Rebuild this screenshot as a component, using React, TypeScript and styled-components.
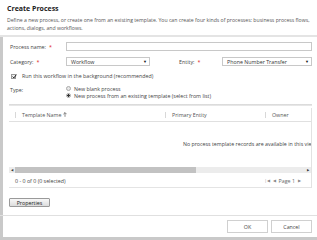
import React from "react";
import styled, { createGlobalStyle } from "styled-components";

const Global = createGlobalStyle`
  html, body { margin: 0; padding: 0; background: #fff; }
  body { font-family: "Open Sans", "Noto Sans", "Liberation Sans", sans-serif; color: #444; }
  * { box-sizing: border-box; }
`;

const Dialog = styled.div`
  width: 317px;
  height: 240px;
  display: flex;
  flex-direction: column;
  overflow: hidden;
  background: #fff;
`;

const Header = styled.div`
  height: 37px;
  padding: 4px 5px 0 7px;
  border-bottom: 2px solid #e4e4e4;
  flex-shrink: 0;
`;

const Title = styled.div`
  font-size: 7px;
  font-weight: 700;
  color: #222;
  line-height: 9px;
  margin-bottom: 3px;
`;

const Desc = styled.div`
  font-size: 5.15px;
  line-height: 8px;
  color: #555;
  width: 306px;
`;

const Body = styled.div`
  flex: 1;
  display: flex;
  min-height: 0;
`;

const LeftStrip = styled.div`
  width: 3px;
  background: #c9c9c9;
  flex-shrink: 0;
`;

const Content = styled.div`
  flex: 1;
  display: flex;
  flex-direction: column;
  padding: 0 5px 0 3px;
  font-size: 5.3px;
  min-width: 0;
`;

const Row = styled.div<{ $h: number; $mt?: number }>`
  display: flex;
  align-items: center;
  height: ${(p) => p.$h}px;
  margin-top: ${(p) => p.$mt ?? 0}px;
`;

const Label = styled.div<{ $w: number; $pl?: number }>`
  width: ${(p) => p.$w}px;
  flex-shrink: 0;
  padding-left: ${(p) => p.$pl ?? 4}px;
  color: #444;
  white-space: nowrap;
`;

const Req = styled.span`
  color: #d22;
  margin-left: 3px;
`;

const Input = styled.div`
  flex: 1;
  height: 9px;
  border: 1px solid #c8c8c8;
  background: #fff;
`;

const Select = styled.div<{ $w: number }>`
  width: ${(p) => p.$w}px;
  height: 9px;
  border: 1px solid #c8c8c8;
  display: flex;
  align-items: center;
  justify-content: space-between;
  padding: 0 2px 0 4px;
  color: #333;
  white-space: nowrap;
`;

const Arrow = styled.span`
  font-size: 4px;
  color: #111;
`;

const Check = styled.span`
  width: 5px;
  height: 5px;
  border: 1px solid #999;
  background: #eee;
  margin: 0 6px 0 5px;
  display: inline-flex;
  align-items: center;
  justify-content: center;
  position: relative;
`;

const TypeBlock = styled.div`
  display: flex;
  margin-top: 5px;
`;

const TypeLabel = styled.div`
  width: 60px;
  padding-left: 4px;
  padding-top: 1px;
`;

const Radios = styled.div`
  display: flex;
  flex-direction: column;
`;

const RadioRow = styled.div`
  display: flex;
  align-items: center;
  height: 7px;
  white-space: nowrap;
`;

const Radio = styled.span<{ $on?: boolean }>`
  width: 5px;
  height: 5px;
  border-radius: 50%;
  border: 1px solid #aaa;
  background: ${(p) => (p.$on ? "radial-gradient(circle, #333 0 1px, #ddd 1.2px)" : "#e8e8e8")};
  margin-right: 3px;
`;

const Shadow = styled.div`
  height: 2px;
  margin: 5px 0 2px 3px;
  background: linear-gradient(#d6d6d6, #ececec);
`;

const Grid = styled.div`
  margin-left: 3px;
  border-right: 1px solid #e2e2e2;
  display: flex;
  flex-direction: column;
`;

const GridHead = styled.div`
  height: 14px;
  display: flex;
  align-items: center;
  border-bottom: 1px solid #e0e0e0;
  color: #555;
`;

const Col = styled.div<{ $w?: number }>`
  ${(p) => (p.$w ? `width: ${p.$w}px;` : "flex: 1;")}
  height: 6px;
  display: flex;
  align-items: center;
  gap: 2px;
  border-left: 1px solid #d8d8d8;
  padding-left: 6px;
  white-space: nowrap;
`;

const Spacer = styled.div`
  width: 6px;
`;

const GridBody = styled.div`
  height: 45px;
  display: flex;
  align-items: center;
  justify-content: flex-end;
  overflow: hidden;
  white-space: nowrap;
  color: #444;
  padding-bottom: 1px;
`;

const Empty = styled.div`
  margin-right: -6px;
`;

const HScroll = styled.div`
  height: 6px;
  display: flex;
  align-items: center;
  background: #ececec;
`;

const ScrollBtn = styled.span`
  width: 6px;
  font-size: 3px;
  color: #333;
  text-align: center;
`;

const Thumb = styled.div`
  width: 181px;
  height: 6px;
  background: #c2c2c2;
`;

const Fill = styled.div`
  flex: 1;
`;

const GridFoot = styled.div`
  height: 15px;
  display: flex;
  align-items: center;
  justify-content: space-between;
  border-bottom: 1px solid #e4e4e4;
  padding: 1px 10px 0 6px;
  color: #444;
`;

const Pager = styled.div`
  display: flex;
  align-items: center;
  gap: 3px;
  color: #666;
`;

const PagerIcon = styled.span`
  font-size: 4px;
  color: #888;
`;

const PropsBtn = styled.button`
  margin: 10px 0 0 3px;
  width: 41px;
  height: 9px;
  padding: 0;
  font: inherit;
  font-size: 5.3px;
  color: #222;
  border: 1px solid #9a9a9a;
  border-radius: 1px;
  background: linear-gradient(#f8f8f8, #dcdcdc);
  display: flex;
  align-items: center;
  justify-content: center;
`;

const Footer = styled.div`
  margin-top: 8px;
  border-top: 1px solid #e0e0e0;
  display: flex;
  justify-content: flex-end;
  gap: 3px;
  padding: 4px 5px 0 0;
  margin-left: -6px;
  margin-right: -5px;
`;

const DlgBtn = styled.button`
  width: 41px;
  height: 13px;
  padding: 0;
  font: inherit;
  font-size: 5.3px;
  color: #444;
  background: #fff;
  border: 1px solid #d0d0d0;
`;

const BottomBar = styled.div`
  height: 3px;
  background: #c9c9c9;
  flex-shrink: 0;
`;

export default function App() {
  return (
    <>
      <Global />
      <Dialog>
        <Header>
          <Title>Create Process</Title>
          <Desc>
            Define a new process, or create one from an existing template. You can create four kinds of processes: business process flows, actions, dialogs, and workflows.
          </Desc>
        </Header>
        <Body>
          <LeftStrip />
          <Content>
            <Row $h={9} $mt={5}>
              <Label $w={60}>
                Process name:<Req>*</Req>
              </Label>
              <Input />
            </Row>
            <Row $h={9} $mt={6}>
              <Label $w={60}>
                Category:<Req>*</Req>
              </Label>
              <Select $w={86}>
                Workflow<Arrow>▼</Arrow>
              </Select>
              <Label $w={72} $pl={29}>
                Entity:<Req>*</Req>
              </Label>
              <Select $w={92}>
                Phone Number Transfer<Arrow>▼</Arrow>
              </Select>
            </Row>
            <Row $h={8} $mt={6}>
              <Check>
                <svg width="5" height="5" viewBox="0 0 5 5" style={{ position: "absolute", left: 0, top: -1 }}>
                  <path d="M0.6 2.6 L1.9 3.9 L4.4 0.6" stroke="#222" strokeWidth="1" fill="none" />
                </svg>
              </Check>
              Run this workflow in the background (recommended)
            </Row>
            <TypeBlock>
              <TypeLabel>Type:</TypeLabel>
              <Radios>
                <RadioRow>
                  <Radio />
                  New blank process
                </RadioRow>
                <RadioRow>
                  <Radio $on />
                  New process from an existing template (select from list)
                </RadioRow>
              </Radios>
            </TypeBlock>
            <Shadow />
            <Grid>
              <GridHead>
                <Spacer />
                <Col $w={150}>
                  Template Name
                  <svg width="4" height="5" viewBox="0 0 4 5">
                    <path d="M2 4.8 V0.6 M0.4 2.2 L2 0.6 L3.6 2.2" stroke="#555" strokeWidth="0.7" fill="none" />
                  </svg>
                </Col>
                <Col $w={100}>Primary Entity</Col>
                <Col>Owner</Col>
              </GridHead>
              <GridBody>
                <Empty>No process template records are available in this view.</Empty>
              </GridBody>
              <HScroll>
                <ScrollBtn>◀</ScrollBtn>
                <Thumb />
                <Fill />
                <ScrollBtn>▶</ScrollBtn>
              </HScroll>
              <GridFoot>
                <span>0 - 0 of 0 (0 selected)</span>
                <Pager>
                  <PagerIcon>|◀</PagerIcon>
                  <PagerIcon>◀</PagerIcon>
                  <span>Page 1</span>
                  <PagerIcon>▶</PagerIcon>
                </Pager>
              </GridFoot>
            </Grid>
            <div>
              <PropsBtn>Properties</PropsBtn>
            </div>
            <Footer>
              <DlgBtn>OK</DlgBtn>
              <DlgBtn>Cancel</DlgBtn>
            </Footer>
          </Content>
        </Body>
        <BottomBar />
      </Dialog>
    </>
  );
}
